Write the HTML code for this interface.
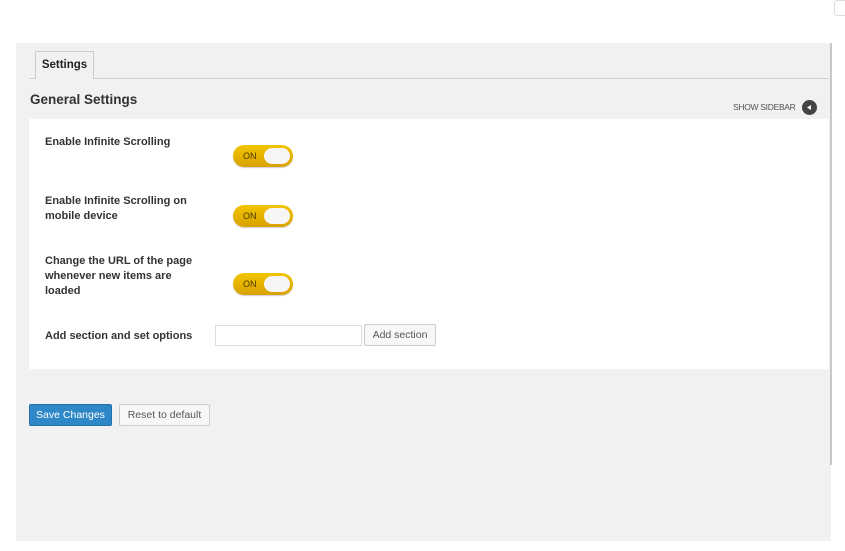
<!DOCTYPE html>
<html><head><style>
body{margin:0;width:845px;height:551px;background:#fff;font-family:"Liberation Sans",sans-serif;position:relative;overflow:hidden}
.a{position:absolute}
.gray{left:16px;top:43px;width:815px;height:498px;background:#f1f1f1}
.sb{left:830px;top:43px;width:2px;height:422px;background:#c8c8c8}
.tab{left:35px;top:51px;width:57px;height:27px;border:1px solid #ccc;border-bottom:none;background:#f1f1f1;font-size:11.5px;font-weight:bold;color:#222;text-align:center;line-height:27px;z-index:2}
.tl{left:29px;top:78px;width:800px;height:1px;background:#d0d0d0}
h2{position:absolute;left:30px;top:92px;margin:0;font-size:13.5px;font-weight:bold;color:#333}
.show{left:733px;top:102px;font-size:8.5px;color:#555;letter-spacing:-0.3px}
.circ{left:802px;top:100px;width:15px;height:15px;border-radius:50%;background:#444}
.panel{left:29px;top:119px;width:800px;height:250px;background:#fff}
.lbl{font-size:11px;font-weight:bold;color:#333;line-height:15px;left:45px}
.tog{left:233px;width:60px;height:22px;border-radius:11px;background:linear-gradient(#f2c400,#d9a200);box-shadow:0 1px 1px rgba(0,0,0,.2)}
.tog span{position:absolute;left:10px;top:6px;font-size:9px;color:#4a3a00}
.tog i{position:absolute;left:31px;top:3px;width:26px;height:16px;border-radius:8px;background:#f6f6f6}
.inp{left:215px;top:325px;width:145px;height:19px;border:1px solid #ddd;background:#fff}
.btn{border:1px solid #ccc;background:#f7f7f7;color:#555;font-size:10.5px;text-align:center;border-radius:2px}
</style></head><body>
<div class="a gray"></div><div class="a sb"></div>
<div class="a tl"></div>
<div class="a tab">Settings</div>
<h2>General Settings</h2>
<div class="a show">SHOW SIDEBAR</div>
<div class="a circ"><svg width="15" height="15"><path d="M5 7.5L9 5V10Z" fill="#fff"/></svg></div>
<div class="a panel"></div>
<div class="a lbl" style="top:135px">Enable Infinite Scrolling</div>
<div class="a tog" style="top:145px"><span>ON</span><i></i></div>
<div class="a lbl" style="top:194px">Enable Infinite Scrolling on<br>mobile device</div>
<div class="a tog" style="top:205px"><span>ON</span><i></i></div>
<div class="a lbl" style="top:254px">Change the URL of the page<br>whenever new items are<br>loaded</div>
<div class="a tog" style="top:273px"><span>ON</span><i></i></div>
<div class="a lbl" style="top:329px">Add section and set options</div>
<div class="a inp"></div>
<div class="a btn" style="left:364px;top:324px;width:70px;height:20px;line-height:20px">Add section</div>
<div class="a btn" style="left:29px;top:404px;width:81px;height:20px;line-height:20px;background:#2e87c7;border-color:#2271a8;color:#fff">Save Changes</div>
<div class="a btn" style="left:119px;top:404px;width:89px;height:20px;line-height:20px">Reset to default</div>
<div class="a" style="left:834px;top:0;width:11px;height:14px;border:1px solid #ddd;border-right:none;border-radius:3px 0 0 3px"></div>
</body></html>
